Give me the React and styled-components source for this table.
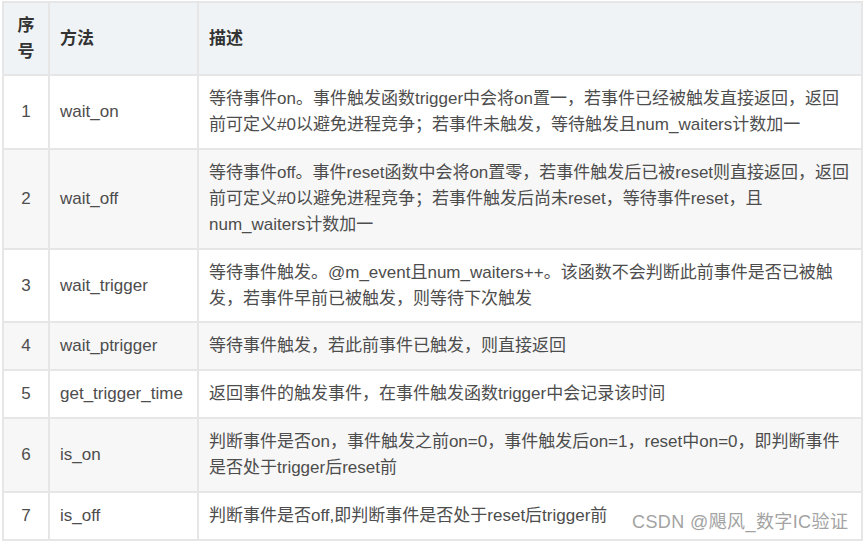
import React from 'react';
import styled, { createGlobalStyle } from 'styled-components';

const GlobalStyle = createGlobalStyle`
  body {
    margin: 0;
    background: #ffffff;
    font-family: "Liberation Sans", "Noto Sans CJK SC", sans-serif;
  }
`;

const Page = styled.div`
  position: relative;
  width: 865px;
  height: 541px;
  padding: 1px 0 0 2px;
  box-sizing: border-box;
  overflow: hidden;
`;

const Table = styled.table`
  width: 861px;
  border-collapse: collapse;
  table-layout: fixed;
  font-size: 17px;
  line-height: 26px;
  color: #4d4d4d;
`;

const Th = styled.th`
  background-color: #eff3f6;
  border: 2px solid #e6e6e6;
  padding: 10px 10px 9px;
  font-weight: bold;
  color: #333333;
  text-align: ${(p) => (p.center ? 'center' : 'left')};
  vertical-align: middle;
`;

const Tr = styled.tr`
  background-color: ${(p) => (p.striped ? '#f7f7f7' : '#ffffff')};
`;

const Td = styled.td`
  border: 2px solid #e6e6e6;
  padding: 10px 10px ${(p) => (p.tight ? 9 : 10)}px;
  text-align: ${(p) => (p.center ? 'center' : 'left')};
  vertical-align: middle;
  overflow-wrap: break-word;
`;

const Watermark = styled.div`
  position: absolute;
  left: 632px;
  top: 507px;
  font-size: 18px;
  letter-spacing: 0.4px;
  color: #a3a3a3;
  white-space: nowrap;
`;

const rows = [
  ['1', 'wait_on', '等待事件on。事件触发函数trigger中会将on置一，若事件已经被触发直接返回，返回前可定义#0以避免进程竞争；若事件未触发，等待触发且num_waiters计数加一'],
  ['2', 'wait_off', '等待事件off。事件reset函数中会将on置零，若事件触发后已被reset则直接返回，返回前可定义#0以避免进程竞争；若事件触发后尚未reset，等待事件reset，且num_waiters计数加一'],
  ['3', 'wait_trigger', '等待事件触发。@m_event且num_waiters++。该函数不会判断此前事件是否已被触发，若事件早前已被触发，则等待下次触发'],
  ['4', 'wait_ptrigger', '等待事件触发，若此前事件已触发，则直接返回'],
  ['5', 'get_trigger_time', '返回事件的触发事件，在事件触发函数trigger中会记录该时间'],
  ['6', 'is_on', '判断事件是否on，事件触发之前on=0，事件触发后on=1，reset中on=0，即判断事件是否处于trigger后reset前'],
  ['7', 'is_off', '判断事件是否off,即判断事件是否处于reset后trigger前'],
];

export default function App() {
  return (
    <Page>
      <GlobalStyle />
      <Table>
        <colgroup>
          <col style={{ width: 46 }} />
          <col style={{ width: 149 }} />
          <col />
        </colgroup>
        <thead>
          <tr>
            <Th center>序号</Th>
            <Th>方法</Th>
            <Th>描述</Th>
          </tr>
        </thead>
        <tbody>
          {rows.map((r, i) => (
            <Tr key={r[0]} striped={i % 2 === 1}>
              <Td center tight={i === 2}>{r[0]}</Td>
              <Td tight={i === 2}>{r[1]}</Td>
              <Td tight={i === 2}>{r[2]}</Td>
            </Tr>
          ))}
        </tbody>
      </Table>
      <Watermark>CSDN @飓风_数字IC验证</Watermark>
    </Page>
  );
}
